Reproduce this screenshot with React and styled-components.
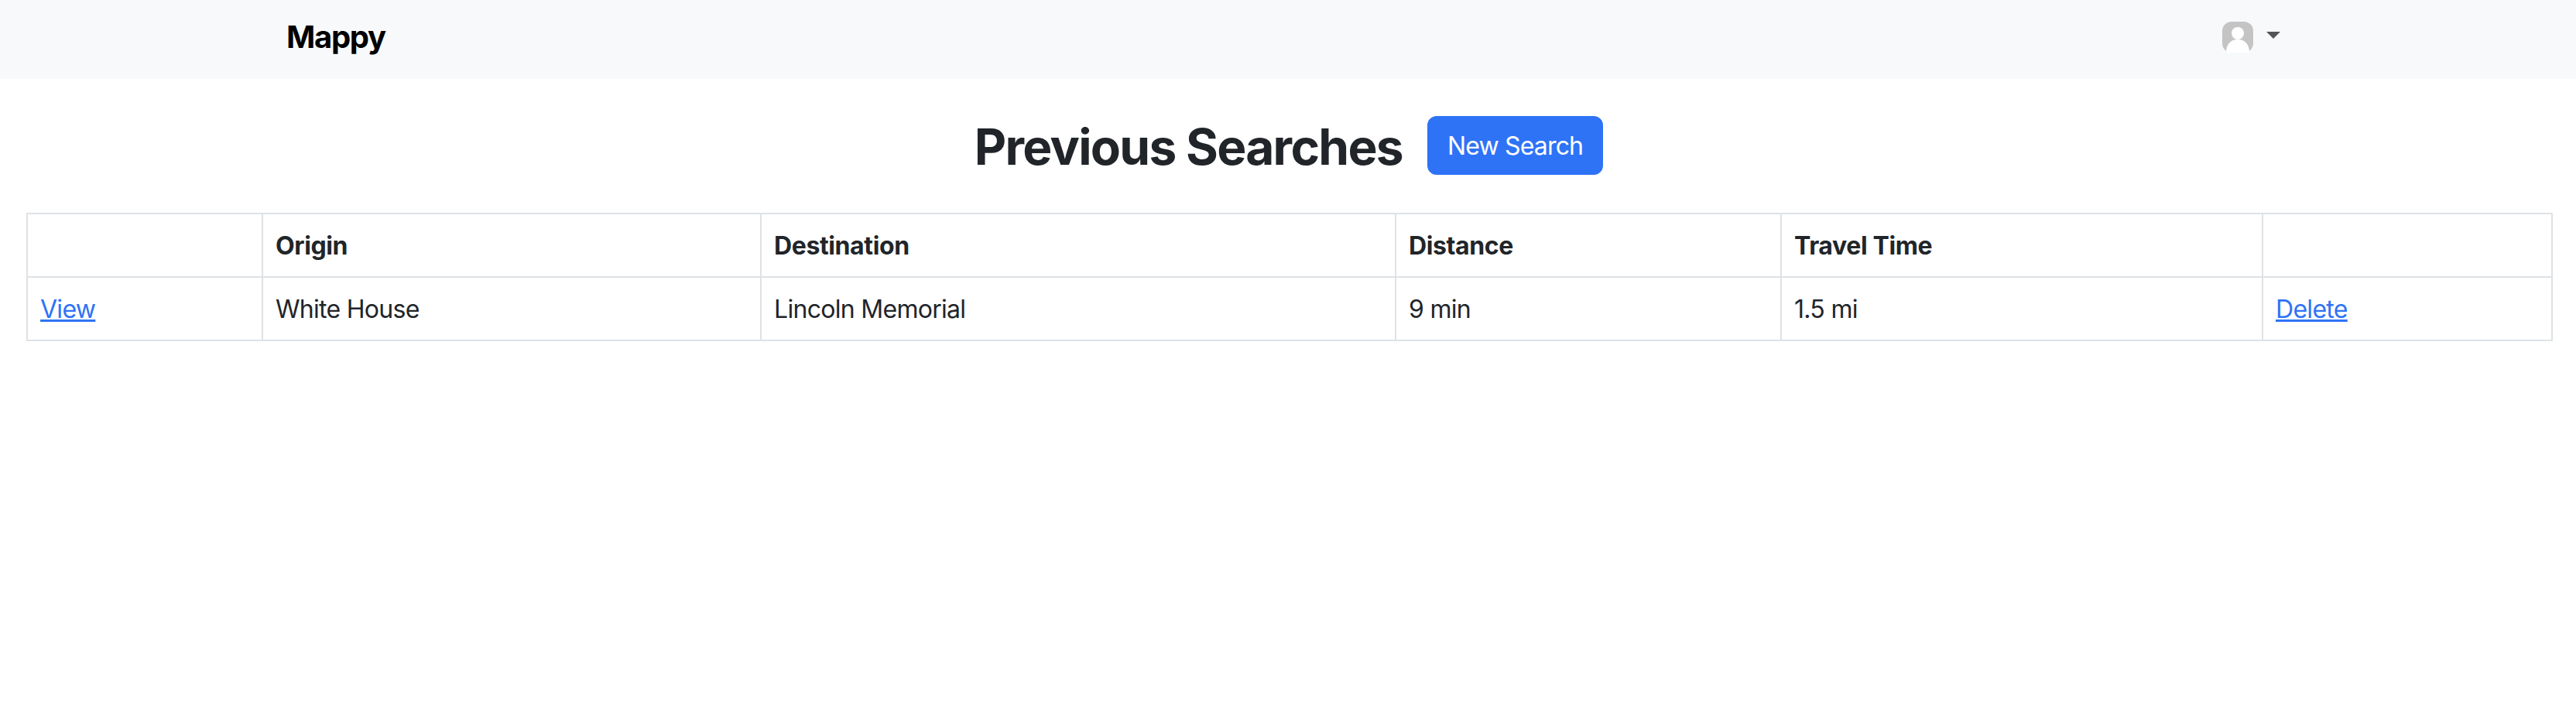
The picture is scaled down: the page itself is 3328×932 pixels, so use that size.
import React from 'react';
import styled, { createGlobalStyle } from 'styled-components';

const GlobalStyle = createGlobalStyle`
  body {
    margin: 0;
    background: #fff;
    color: #212529;
    font-family: Inter, "Liberation Sans", sans-serif;
    font-size: 32px;
    line-height: 1.5;
    letter-spacing: -0.022em;
  }
`;

const Navbar = styled.nav`
  display: flex;
  justify-content: space-between;
  align-items: center;
  height: 102px;
  padding: 0 382px 6px 370px;
  box-sizing: border-box;
  background: #f8f9fa;
`;

const Brand = styled.div`
  font-size: 40px;
  font-weight: 700;
  line-height: 60px;
  letter-spacing: -0.032em;
  color: #000;
`;

const UserMenu = styled.div`
  display: flex;
  align-items: center;
  gap: 17px;
`;

const Caret = styled.span`
  width: 0;
  height: 0;
  margin-top: -6px;
  border-top: 9px solid #555;
  border-left: 9px solid transparent;
  border-right: 9px solid transparent;
`;

const Heading = styled.div`
  display: flex;
  justify-content: center;
  align-items: center;
  gap: 32px;
  margin: 48px 0 49px;
  padding-left: 2px;
`;

const Title = styled.h2`
  margin: 0;
  padding-top: 4px;
  font-size: 64px;
  font-weight: 700;
  line-height: 70px;
  letter-spacing: -0.027em;
`;

const Button = styled.button`
  height: 76px;
  padding: 2px 24px 0;
  border: 2px solid #2e73f6;
  border-radius: 12px;
  background: #2e73f6;
  color: #fff;
  font: inherit;
  letter-spacing: -0.026em;
`;

const TableWrap = styled.div`
  padding: 0 30px 0 34px;
`;

const Table = styled.table`
  width: 100%;
  border-collapse: collapse;
  table-layout: fixed;
`;

const Cell = styled.td`
  box-sizing: border-box;
  width: ${({ $width }) => ($width ? `${$width}px` : 'auto')};
  padding: 17px 16px 15px;
  border: 2px solid #dee2e6;
  font-weight: ${({ $head }) => ($head ? 700 : 400)};
  letter-spacing: ${({ $head }) => ($head ? '-0.012em' : 'inherit')};
  text-align: left;
`;

const TableLink = styled.a`
  color: #2e73f6;
  text-decoration: underline;
`;

const columns = [
  { label: '', width: 304 },
  { label: 'Origin', width: 644 },
  { label: 'Destination', width: 820 },
  { label: 'Distance', width: 498 },
  { label: 'Travel Time', width: 622 },
  { label: '' },
];

function Avatar() {
  return (
    <svg width="40" height="40" viewBox="0 0 40 40">
      <rect width="40" height="40" rx="12" fill="#c4c4c4" />
      <circle cx="20" cy="15" r="8" fill="#fff" />
      <path d="M5 40c0-11 6-17 15-17s15 6 15 17z" fill="#fff" />
    </svg>
  );
}

export default function App() {
  return (
    <>
      <GlobalStyle />
      <Navbar>
        <Brand>Mappy</Brand>
        <UserMenu>
          <Avatar />
          <Caret />
        </UserMenu>
      </Navbar>
      <Heading>
        <Title>Previous Searches</Title>
        <Button>New Search</Button>
      </Heading>
      <TableWrap>
        <Table>
          <thead>
            <tr>
              {columns.map((col, i) => (
                <Cell as="th" key={i} $head $width={col.width}>
                  {col.label}
                </Cell>
              ))}
            </tr>
          </thead>
          <tbody>
            <tr>
              <Cell><TableLink href="#">View</TableLink></Cell>
              <Cell>White House</Cell>
              <Cell>Lincoln Memorial</Cell>
              <Cell>9 min</Cell>
              <Cell>1.5 mi</Cell>
              <Cell><TableLink href="#">Delete</TableLink></Cell>
            </tr>
          </tbody>
        </Table>
      </TableWrap>
    </>
  );
}
